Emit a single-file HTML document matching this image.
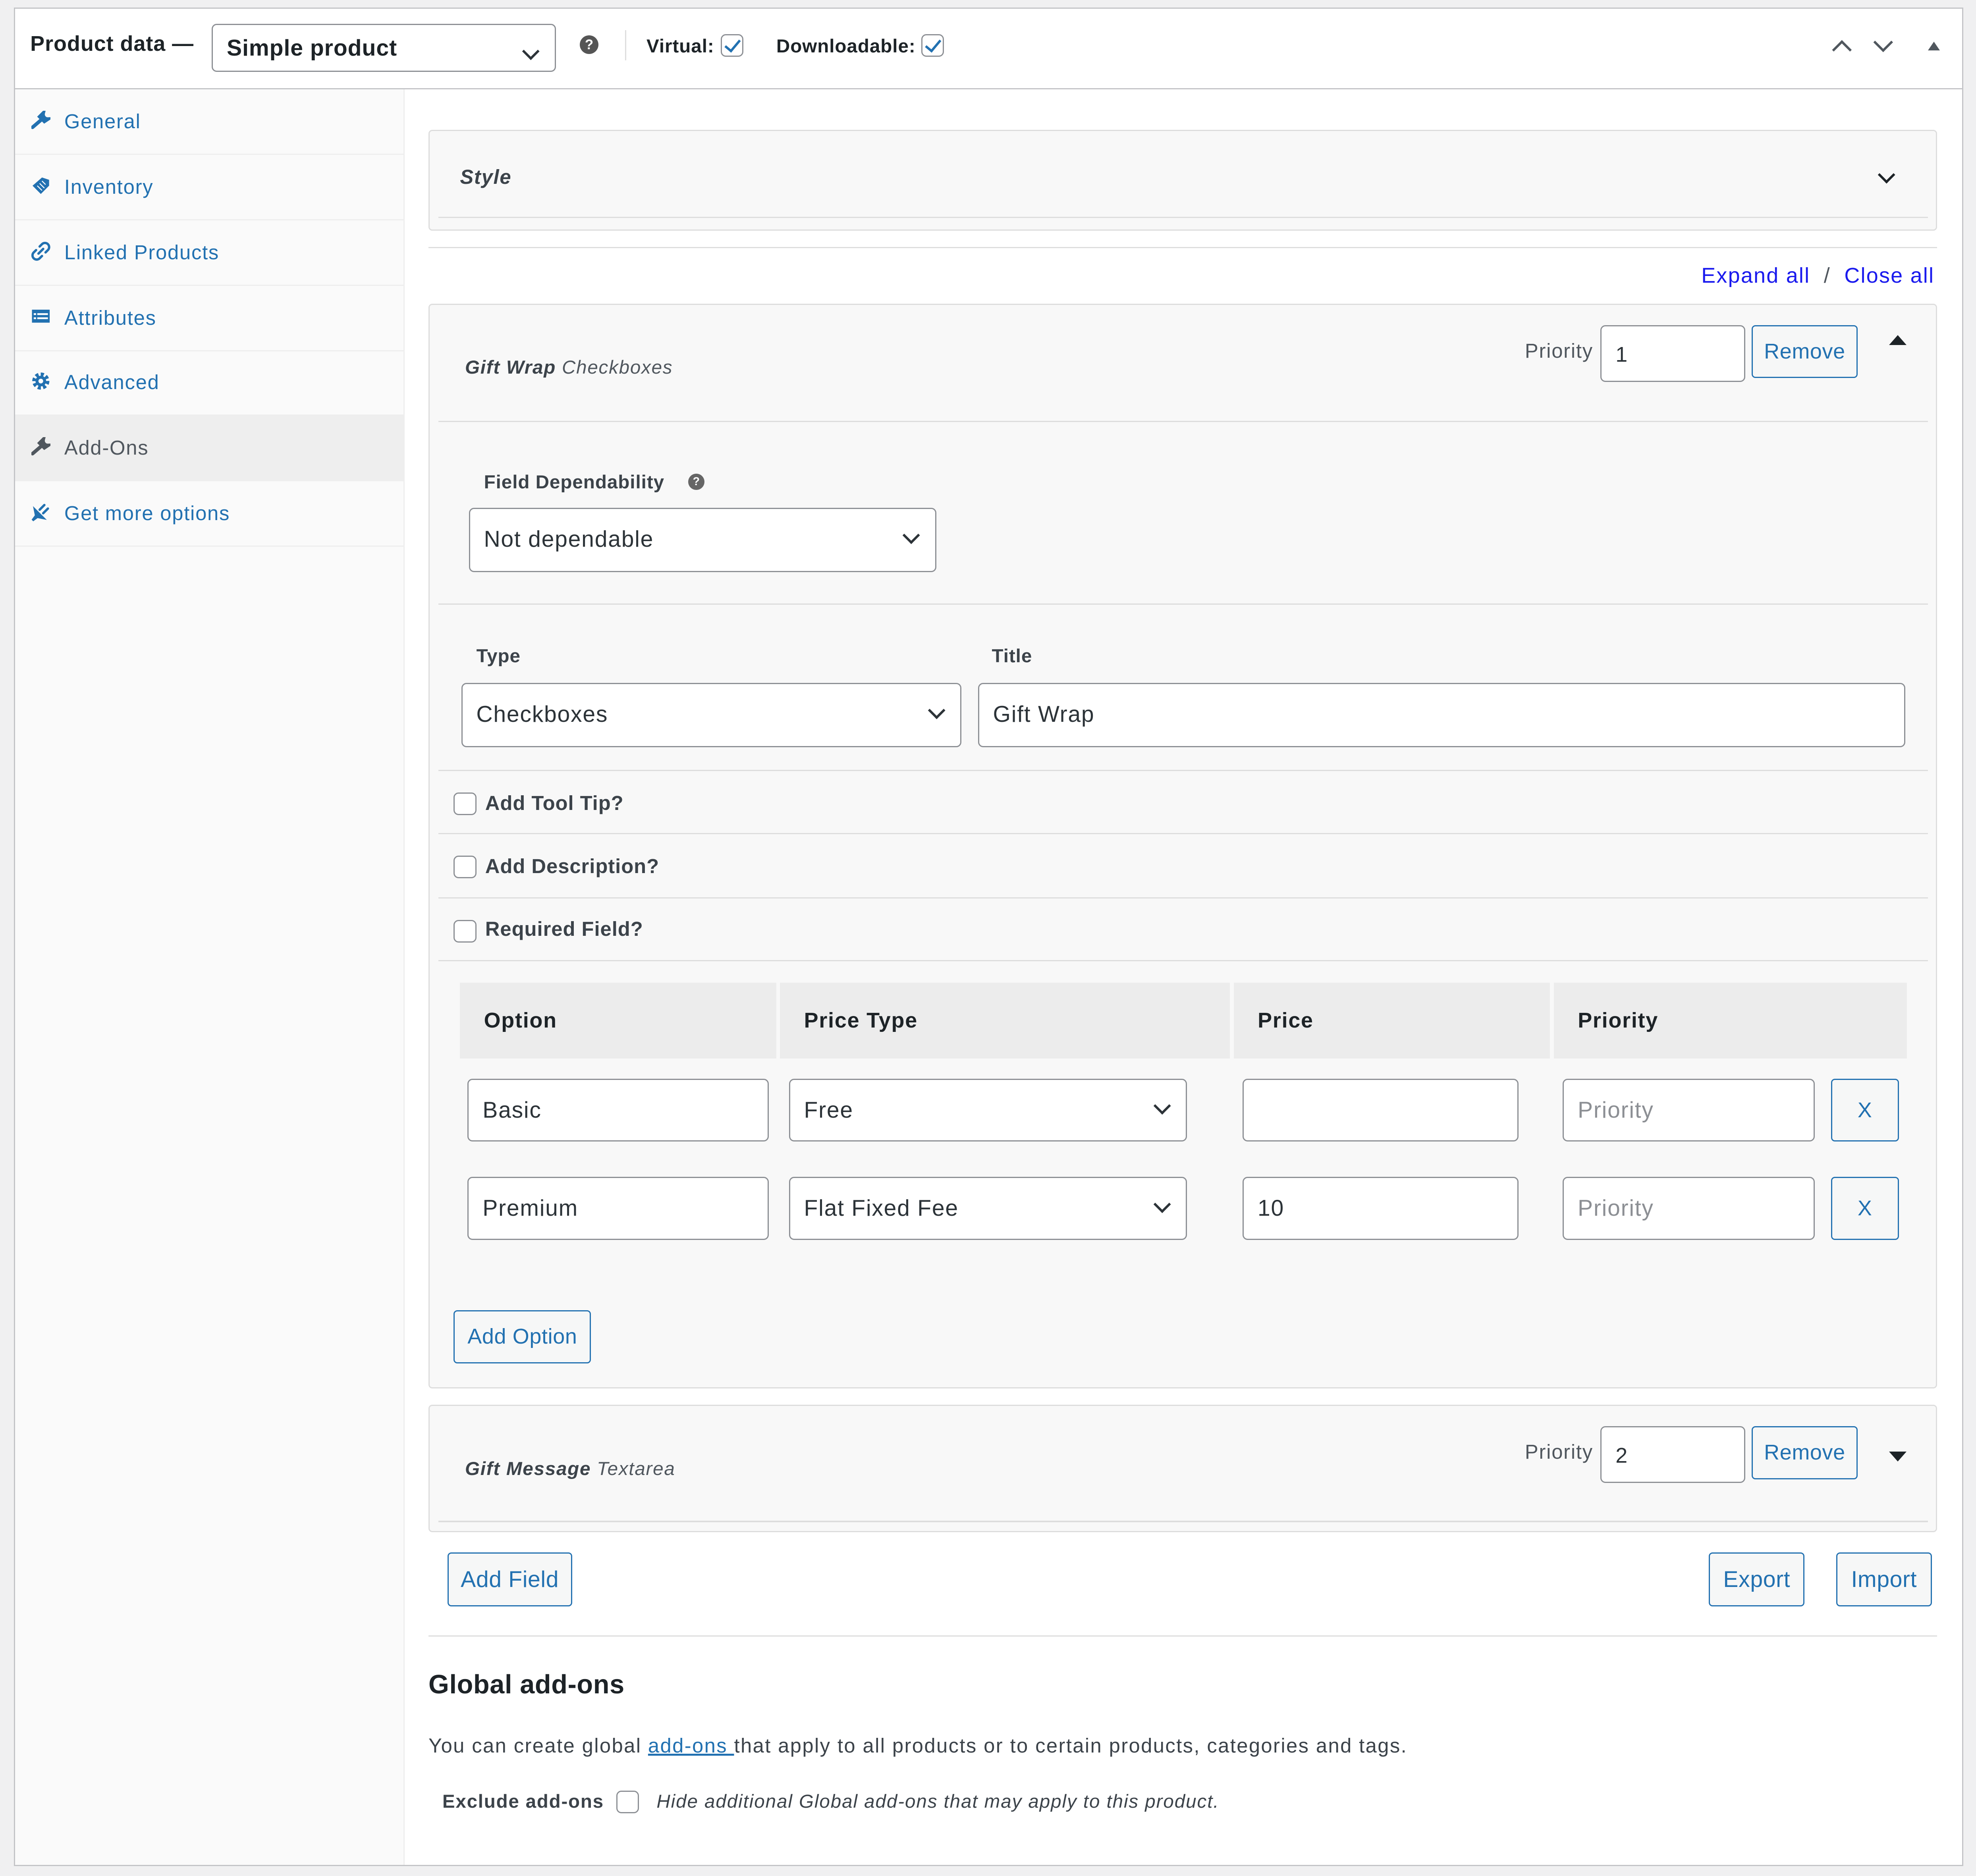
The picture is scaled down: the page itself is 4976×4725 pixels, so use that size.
<!DOCTYPE html>
<html><head><meta charset="utf-8"><style>
html,body{margin:0;padding:0;background:#f0f0f1;}
#w{zoom:3.1735;width:1568px;height:1489px;position:relative;font-family:"Liberation Sans",sans-serif;color:#1d2327;overflow:hidden;letter-spacing:0.55px;}
.a{position:absolute;}
.box{position:absolute;left:11px;top:6px;width:1545px;height:1473px;background:#fff;border:1px solid #c3c4c7;}
.side{position:absolute;left:12px;top:71px;width:308px;height:1409px;background:#fafafa;border-right:1px solid #eee;}
.it{position:absolute;left:0;width:308px;height:51px;border-bottom:1px solid #eee;font-size:16px;color:#2271b1;line-height:51px;}
.it span{position:absolute;left:39px;}
.it svg{position:absolute;left:13px;top:17px;width:15px;height:15px;}
.inp{position:absolute;background:#fff;border:1px solid #8c8f94;border-radius:4px;box-sizing:border-box;font-size:18px;line-height:48px;padding-left:11px;color:#2c3338;}
.sel:after{content:"";position:absolute;right:14px;top:16px;width:8px;height:8px;border-right:2px solid #2c3338;border-bottom:2px solid #2c3338;transform:rotate(45deg);}
.btn{position:absolute;border:1px solid #2271b1;color:#2271b1;border-radius:3px;background:#f6f7f7;box-sizing:border-box;text-align:center;font-size:17px;}
.panel{position:absolute;left:340px;width:1197px;background:#f8f8f8;border:1px solid #ddd;border-radius:3px;box-sizing:border-box;}
.hl{position:absolute;height:1px;background:#ddd;}
.cb{position:absolute;width:18px;height:18px;border:1px solid #8c8f94;border-radius:4px;background:#fff;box-sizing:border-box;}
.lab{position:absolute;font-size:16px;font-weight:bold;color:#3c434a;letter-spacing:0.3px;}
.th{position:absolute;top:780px;height:60px;background:#ececec;font-weight:bold;font-size:17px;line-height:60px;padding-left:19px;box-sizing:border-box;}
</style></head><body><div id="w">
<div class="box"></div>
<div class="a" style="left:12px;top:70px;width:1545px;height:1px;background:#c3c4c7"></div>
<div class="a" style="left:24px;top:25px;font-size:17px;font-weight:bold;letter-spacing:0.3px">Product data —</div>
<div class="inp sel" style="left:168px;top:19px;width:273px;height:38px;line-height:37px;font-size:18px;font-weight:bold;padding-left:11px;color:#1d2327;letter-spacing:0.3px">Simple product</div>
<div class="a" style="left:460px;top:28px;width:15px;height:15px;border-radius:50%;background:#555;color:#fff;font-size:11px;font-weight:bold;text-align:center;line-height:15px;letter-spacing:0">?</div>
<div class="a" style="left:496px;top:24px;width:1px;height:24px;background:#ddd"></div>
<div class="a" style="left:513px;top:28px;font-size:15px;font-weight:bold;letter-spacing:0.3px">Virtual:</div>
<div class="cb" style="left:572px;top:27px;"><div class="a" style="left:5px;top:1px;width:5px;height:10px;border-right:2px solid #2271b1;border-bottom:2px solid #2271b1;transform:rotate(40deg)"></div></div>
<div class="a" style="left:616px;top:28px;font-size:15px;font-weight:bold;letter-spacing:0.3px">Downloadable:</div>
<div class="cb" style="left:731px;top:27px;"><div class="a" style="left:5px;top:1px;width:5px;height:10px;border-right:2px solid #2271b1;border-bottom:2px solid #2271b1;transform:rotate(40deg)"></div></div>
<div class="a" style="left:1456px;top:34px;width:9px;height:9px;border-left:2px solid #50575e;border-top:2px solid #50575e;transform:rotate(45deg)"></div>
<div class="a" style="left:1489px;top:28px;width:9px;height:9px;border-right:2px solid #50575e;border-bottom:2px solid #50575e;transform:rotate(45deg)"></div>
<div class="a" style="left:1530px;top:33px;width:0;height:0;border-left:5px solid transparent;border-right:5px solid transparent;border-bottom:7px solid #50575e"></div>

<div class="side">
<div class="it" style="top:0"><svg viewBox="0 0 16 16"><path d="M1 14 L8 8 M10 2 a4 4 0 0 0 4 5 l-3 2 -4 -4z" stroke="#2271b1" stroke-width="3" fill="#2271b1" stroke-linecap="round"/></svg><span>General</span></div>
<div class="it" style="top:52px"><svg viewBox="0 0 16 16"><path d="M1 8 L9 1 L15 3 L15 8 L8 15z" fill="#2271b1"/><path d="M5 8l4 4M7 6l4 4M9 4l3 3" stroke="#fff" stroke-width="0.8"/></svg><span>Inventory</span></div>
<div class="it" style="top:104px"><svg viewBox="0 0 16 16"><path d="M6 10 L10 6 M7 4 l2-2 a3 3 0 0 1 5 5 l-2 2 M9 12 l-2 2 a3 3 0 0 1 -5 -5 l2 -2" stroke="#2271b1" stroke-width="2" fill="none" stroke-linecap="round"/></svg><span>Linked Products</span></div>
<div class="it" style="top:156px"><svg viewBox="0 0 16 16"><rect x="0.5" y="2" width="15" height="11" fill="#2271b1"/><rect x="2" y="5" width="2" height="1.5" fill="#fff"/><rect x="5" y="5" width="9" height="1.5" fill="#fff"/><rect x="2" y="8.5" width="2" height="1.5" fill="#fff"/><rect x="5" y="8.5" width="9" height="1.5" fill="#fff"/></svg><span>Attributes</span></div>
<div class="it" style="top:207px"><svg viewBox="0 0 16 16"><circle cx="8" cy="8" r="5.5" fill="none" stroke="#2271b1" stroke-width="3.5" stroke-dasharray="2.5 1.8"/><circle cx="8" cy="8" r="4.5" fill="#2271b1"/><circle cx="8" cy="8" r="2" fill="#fff"/></svg><span>Advanced</span></div>
<div class="it" style="top:259px;background:#eee;color:#50575e"><svg viewBox="0 0 16 16"><path d="M1 14 L8 8 M10 2 a4 4 0 0 0 4 5 l-3 2 -4 -4z" stroke="#50575e" stroke-width="3" fill="#50575e" stroke-linecap="round"/></svg><span>Add-Ons</span></div>
<div class="it" style="top:311px"><svg viewBox="0 0 16 16"><path d="M1 15 L4 11 L3 6 L10 13 L5 12z M7 6 L11 2 M10 9 L14 5" stroke="#2271b1" stroke-width="2" fill="#2271b1" stroke-linecap="round"/></svg><span>Get more options</span></div>
</div>

<div class="panel" style="top:103px;height:80px;"></div>
<div class="a" style="left:348px;top:172px;width:1182px;height:1px;background:#ddd"></div>
<div class="a" style="left:365px;top:131px;font-size:16px;font-weight:bold;font-style:italic;color:#3c434a">Style</div>
<div class="a" style="left:1492px;top:134px;width:8px;height:8px;border-right:2px solid #1d2327;border-bottom:2px solid #1d2327;transform:rotate(45deg)"></div>
<div class="hl" style="left:340px;top:196px;width:1197px"></div>
<div class="a" style="left:1350px;top:209px;font-size:17px;color:#1a1aee;letter-spacing:0.7px">Expand all <span style="color:#50575e">&nbsp;/&nbsp;</span> Close all</div>

<div class="panel" style="top:241px;height:861px;"></div>
<div class="a" style="left:369px;top:283px;font-size:15px;font-style:italic;color:#50575e"><b style="color:#3c434a">Gift Wrap</b> Checkboxes</div>
<div class="a" style="left:1210px;top:269px;font-size:16px;color:#50575e">Priority</div>
<div class="inp" style="left:1270px;top:258px;width:115px;height:45px;line-height:45px;font-size:17px">1</div>
<div class="btn" style="left:1390px;top:258px;width:84px;height:42px;line-height:40px;letter-spacing:0.2px">Remove</div>
<div class="a" style="left:1499px;top:266px;border-left:7px solid transparent;border-right:7px solid transparent;border-bottom:8px solid #1d2327"></div>
<div class="hl" style="left:348px;top:334px;width:1182px"></div>
<div class="lab" style="left:384px;top:374px;font-size:15px">Field Dependability</div>
<div class="a" style="left:546px;top:376px;width:13px;height:13px;border-radius:50%;background:#666;color:#fff;font-size:9px;font-weight:bold;text-align:center;line-height:13px;letter-spacing:0">?</div>
<div class="inp sel" style="left:372px;top:403px;width:371px;height:51px">Not dependable</div>
<div class="hl" style="left:348px;top:479px;width:1182px"></div>
<div class="lab" style="left:378px;top:512px;font-size:15px">Type</div>
<div class="lab" style="left:787px;top:512px;font-size:15px">Title</div>
<div class="inp sel" style="left:366px;top:542px;width:397px;height:51px">Checkboxes</div>
<div class="inp" style="left:776px;top:542px;width:736px;height:51px">Gift Wrap</div>
<div class="hl" style="left:348px;top:611px;width:1182px"></div>
<div class="cb" style="left:360px;top:629px;"></div><div class="lab" style="left:385px;top:628px">Add Tool Tip?</div>
<div class="hl" style="left:348px;top:661px;width:1182px"></div>
<div class="cb" style="left:360px;top:679px;"></div><div class="lab" style="left:385px;top:678px">Add Description?</div>
<div class="hl" style="left:348px;top:712px;width:1182px"></div>
<div class="cb" style="left:360px;top:730px;"></div><div class="lab" style="left:385px;top:728px">Required Field?</div>
<div class="hl" style="left:348px;top:762px;width:1182px"></div>
<div class="th" style="left:365px;width:251px">Option</div>
<div class="th" style="left:619px;width:357px">Price Type</div>
<div class="th" style="left:979px;width:251px">Price</div>
<div class="th" style="left:1233px;width:280px">Priority</div>
<div class="inp" style="left:371px;top:856px;width:239px;height:50px">Basic</div>
<div class="inp sel" style="left:626px;top:856px;width:316px;height:50px">Free</div>
<div class="inp" style="left:986px;top:856px;width:219px;height:50px"></div>
<div class="inp" style="left:1240px;top:856px;width:200px;height:50px;color:#8c8f94">Priority</div>
<div class="btn" style="left:1453px;top:856px;width:54px;height:50px;line-height:48px">X</div>
<div class="inp" style="left:371px;top:934px;width:239px;height:50px">Premium</div>
<div class="inp sel" style="left:626px;top:934px;width:316px;height:50px">Flat Fixed Fee</div>
<div class="inp" style="left:986px;top:934px;width:219px;height:50px">10</div>
<div class="inp" style="left:1240px;top:934px;width:200px;height:50px;color:#8c8f94">Priority</div>
<div class="btn" style="left:1453px;top:934px;width:54px;height:50px;line-height:48px">X</div>
<div class="btn" style="left:360px;top:1040px;width:109px;height:42px;line-height:40px;letter-spacing:0.2px">Add Option</div>

<div class="panel" style="top:1115px;height:101px;"></div>
<div class="a" style="left:369px;top:1157px;font-size:15px;font-style:italic;color:#50575e"><b style="color:#3c434a">Gift Message</b> Textarea</div>
<div class="a" style="left:1210px;top:1143px;font-size:16px;color:#50575e">Priority</div>
<div class="inp" style="left:1270px;top:1132px;width:115px;height:45px;line-height:45px;font-size:17px">2</div>
<div class="btn" style="left:1390px;top:1132px;width:84px;height:42px;line-height:40px;letter-spacing:0.2px">Remove</div>
<div class="a" style="left:1499px;top:1152px;border-left:7px solid transparent;border-right:7px solid transparent;border-top:8px solid #1d2327"></div>
<div class="hl" style="left:348px;top:1207px;width:1182px"></div>

<div class="btn" style="left:355px;top:1232px;width:99px;height:43px;line-height:41px;font-size:18px;letter-spacing:0.2px">Add Field</div>
<div class="btn" style="left:1356px;top:1232px;width:76px;height:43px;line-height:41px;font-size:18px;letter-spacing:0.2px">Export</div>
<div class="btn" style="left:1457px;top:1232px;width:76px;height:43px;line-height:41px;font-size:18px;letter-spacing:0.2px">Import</div>
<div class="hl" style="left:340px;top:1298px;width:1197px"></div>
<div class="a" style="left:340px;top:1325px;font-size:21px;font-weight:bold;letter-spacing:0.2px">Global add-ons</div>
<div class="a" style="left:340px;top:1376px;font-size:16px;color:#3c434a;letter-spacing:0.75px">You can create global <span style="color:#2271b1;text-decoration:underline">add-ons </span>that apply to all products or to certain products, categories and tags.</div>
<div class="a" style="left:351px;top:1421px;font-size:15px;font-weight:bold;color:#3c434a">Exclude add-ons</div>
<div class="cb" style="left:489px;top:1421px;"></div>
<div class="a" style="left:521px;top:1421px;font-size:15px;font-style:italic;color:#3c434a;letter-spacing:0.6px">Hide additional Global add-ons that may apply to this product.</div>
</div></body></html>
